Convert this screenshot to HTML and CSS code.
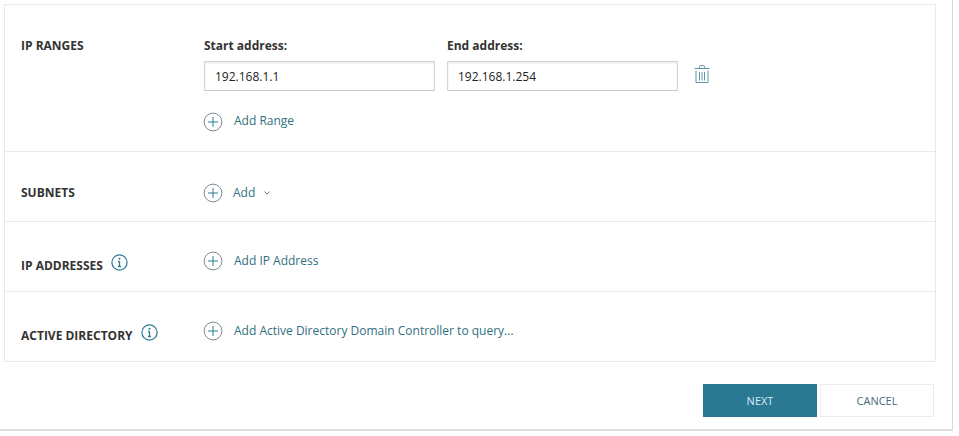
FILE: index.html
```html
<!DOCTYPE html>
<html lang="en">
<head>
<meta charset="utf-8">
<title>Discovery</title>
<link rel="stylesheet" href="styles.css">
</head>
<body>
<main class="panel">
  <section class="card">
    <div class="row row-ranges">
      <div class="label label-top">IP RANGES</div>
      <div class="content">
        <div class="fields">
          <div class="field">
            <label class="field-label" for="start">Start address:</label>
            <input class="input" id="start" value="192.168.1.1">
          </div>
          <div class="field">
            <label class="field-label" for="end">End address:</label>
            <input class="input" id="end" value="192.168.1.254">
          </div>
          <svg class="trash" width="16" height="18" viewBox="0 0 16 18" fill="none" stroke="#5f97a8" stroke-width="1">
            <path d="M0.500 3.500h15M2 5.500v12h12v-12M5.500 3V1.500q0-1 1-1h3q1 0 1 1V3"/>
            <path d="M5.500 7v8.500M8 7v8.500M10.500 7v8.500"/>
          </svg>
        </div>
        <a class="action action-range"><svg class="plus" width="20" height="20" viewBox="0 0 20 20" fill="none"><circle cx="10" cy="10" r="8.900" stroke="#7d8b8f"/><path d="M10 5v10M5 10h10" stroke="#2a7a94"/></svg><span>Add Range</span></a>
      </div>
    </div>
    <div class="row row-small row-subnets">
      <div class="label">SUBNETS</div>
      <a class="action"><svg class="plus" width="20" height="20" viewBox="0 0 20 20" fill="none"><circle cx="10" cy="10" r="8.900" stroke="#7d8b8f"/><path d="M10 5v10M5 10h10" stroke="#2a7a94"/></svg><span class="add-short">Add</span><svg class="chev" width="6" height="4" viewBox="0 0 6 4" fill="none"><path d="M0.500 0.500L3 3l2.500-2.500" stroke="#5b8b9b"/></svg></a>
    </div>
    <div class="row row-small row-low">
      <div class="label label-info">IP ADDRESSES <svg class="info" width="17" height="17" viewBox="0 0 17 17" fill="none"><circle cx="8.500" cy="8.500" r="7.600" stroke="#2a7a94" stroke-width="1.200"/><path d="M8.500 7.500v5M7 7.500h1.500M7 12.500h3" stroke="#2a7a94" stroke-width="1.300"/><circle cx="8.500" cy="4.800" r="1" fill="#2a7a94"/></svg></div>
      <a class="action"><svg class="plus" width="20" height="20" viewBox="0 0 20 20" fill="none"><circle cx="10" cy="10" r="8.900" stroke="#7d8b8f"/><path d="M10 5v10M5 10h10" stroke="#2a7a94"/></svg><span>Add IP Address</span></a>
    </div>
    <div class="row row-small row-low">
      <div class="label label-info">ACTIVE DIRECTORY <svg class="info" width="17" height="17" viewBox="0 0 17 17" fill="none"><circle cx="8.500" cy="8.500" r="7.600" stroke="#2a7a94" stroke-width="1.200"/><path d="M8.500 7.500v5M7 7.500h1.500M7 12.500h3" stroke="#2a7a94" stroke-width="1.300"/><circle cx="8.500" cy="4.800" r="1" fill="#2a7a94"/></svg></div>
      <a class="action"><svg class="plus" width="20" height="20" viewBox="0 0 20 20" fill="none"><circle cx="10" cy="10" r="8.900" stroke="#7d8b8f"/><path d="M10 5v10M5 10h10" stroke="#2a7a94"/></svg><span>Add Active Directory Domain Controller to query...</span></a>
    </div>
  </section>
  <footer class="buttons">
    <button class="btn btn-primary">NEXT</button>
    <button class="btn btn-secondary">CANCEL</button>
  </footer>
</main>
</body>
</html>
```
FILE: styles.css
```css
* { box-sizing: border-box; }
html, body { margin: 0; padding: 0; background: #fff; }
body { font-family: "Open Sans", "Liberation Sans", sans-serif; font-size: 12px; color: #333; overflow: hidden; }
.panel {
  width: 953px;
  height: 431px;
  padding: 4px 16px 0 4px;
  border-right: 1px solid #d9d9d9;
  border-bottom: 2px solid #dcdcdc;
}
.card { width: 932px; height: 358px; border: 1px solid #e9e9e9; }
.row { display: flex; padding-left: 16px; border-bottom: 1px solid #e9e9e9; }
.row:last-child { border-bottom: 0; }
.row-ranges { height: 147px; padding-top: 32px; }
.row-small { height: 70px; align-items: center; }
.row-subnets { padding-top: 12px; }
.row-low { padding-top: 8px; }
.row:last-child { height: 69px; }
.label { width: 183px; font-size: 12px; font-weight: 700; color: #333; flex: none; }
.label-top { line-height: 17px; }
.label-info { display: flex; align-items: center; gap: 8px; white-space: nowrap; padding-top: 9px; }
.info { margin-top: -5px; flex: none; }
.content { display: flex; flex-direction: column; }
.fields { display: flex; gap: 12px; align-items: flex-start; }
.field { display: flex; flex-direction: column; width: 231px; }
.field-label { font-size: 12px; font-weight: 700; color: #333; line-height: 17px; margin-bottom: 7px; }
.input {
  width: 231px;
  height: 30px;
  padding: 0 10px;
  border: 1px solid #d4d4d4;
  border-bottom-color: #c8c8c8;
  box-shadow: inset 0 1px 2px #e4e4e4;
  font: 12px "Open Sans", "Liberation Sans", sans-serif;
  color: #222;
  background: #fff;
  outline: none;
}
.trash { margin: 28px 0 0 4px; flex: none; }
.action { display: flex; align-items: center; color: #2f6f80; font-size: 12px; white-space: nowrap; }
.action-range { margin-top: 18px; }
.plus { flex: none; margin-right: 11px; margin-left: -1px; }
.action-range .plus { margin-top: 3px; }
.add-short { margin-right: 9px; margin-left: -1px; }
.chev { flex: none; margin-top: 1px; }
.buttons { display: flex; justify-content: flex-end; gap: 3px; margin: 22px 0 0 0; width: 930px; }
.btn { width: 114px; height: 33px; font: 11px "Open Sans", "Liberation Sans", sans-serif; cursor: pointer; padding: 0; }
.btn-primary { background: #2b7893; border: 1px solid #2b7893; color: #d4edf5; }
.btn-secondary { background: #fff; border: 1px solid #ececec; color: #3f6b7a; }
```
